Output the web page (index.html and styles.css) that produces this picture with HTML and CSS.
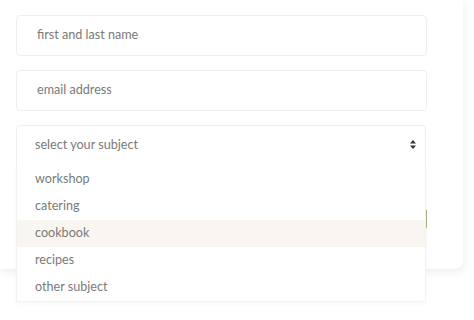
FILE: index.html
```
<!DOCTYPE html>
<html>
<head>
<meta charset="utf-8">
<link rel="stylesheet" href="styles.css">
</head>
<body>
<div class="card">
  <form class="form">
    <div class="field">first and last name</div>
    <div class="field">email address</div>
    <div class="select-wrap">
      <div class="select">
        <span>select your subject</span>
        <svg class="arrows" width="6" height="9" viewBox="0 0 6 9"><path d="M0 3.5 L3 0 L6 3.5 Z M0 5.5 L3 9 L6 5.5 Z" fill="#333"/></svg>
      </div>
      <ul class="menu">
        <li>workshop</li>
        <li>catering</li>
        <li class="hover">cookbook</li>
        <li>recipes</li>
        <li>other subject</li>
      </ul>
    </div>
    <div class="submit"></div>
  </form>
</div>
</body>
</html>
```
FILE: styles.css
```
html, body {
  margin: 0;
  padding: 0;
  background: #ffffff;
}
body {
  font-family: Lato, "Open Sans", "Liberation Sans", sans-serif;
  font-size: 12.6px;
  color: #7a7a7a;
  width: 474px;
  height: 320px;
  overflow: hidden;
}
.card {
  width: 463px;
  height: 269px;
  background: #fff;
  border-radius: 0 0 8px 0;
  box-shadow: 1px 3px 10px rgba(0, 0, 0, 0.07);
  box-sizing: border-box;
  padding: 15px 0 0 16px;
}
.form {
  display: flex;
  flex-direction: column;
  gap: 14px;
  width: 411px;
}
.field, .select {
  height: 41px;
  box-sizing: border-box;
  border: 1px solid #efefef;
  border-radius: 4px;
  padding-left: 20px;
  padding-bottom: 2px;
  display: flex;
  align-items: center;
  background: #fff;
}
.select-wrap {
  position: relative;
  width: 410px;
  z-index: 2;
}
.select {
  padding-left: 18px;
  padding-right: 9px;
  justify-content: space-between;
  border-radius: 4px 4px 0 0;
}
.menu {
  position: absolute;
  left: 0;
  top: 40px;
  width: 410px;
  margin: 0;
  padding: 0;
  list-style: none;
  background: #fff;
  border: 1px solid #f2f2f2;
  border-top: none;
  box-sizing: border-box;
  box-shadow: 0 2px 4px rgba(0, 0, 0, 0.03);
}
.menu li {
  height: 27px;
  line-height: 25px;
  padding-left: 18px;
}
.menu li:first-child {
  margin-top: 1px;
}
.menu li.hover {
  background: #f9f6f1;
}
.submit {
  height: 22px;
  width: 411px;
  margin-top: 28px;
  background: #a3b27a;
  border-radius: 4px;
}
```
